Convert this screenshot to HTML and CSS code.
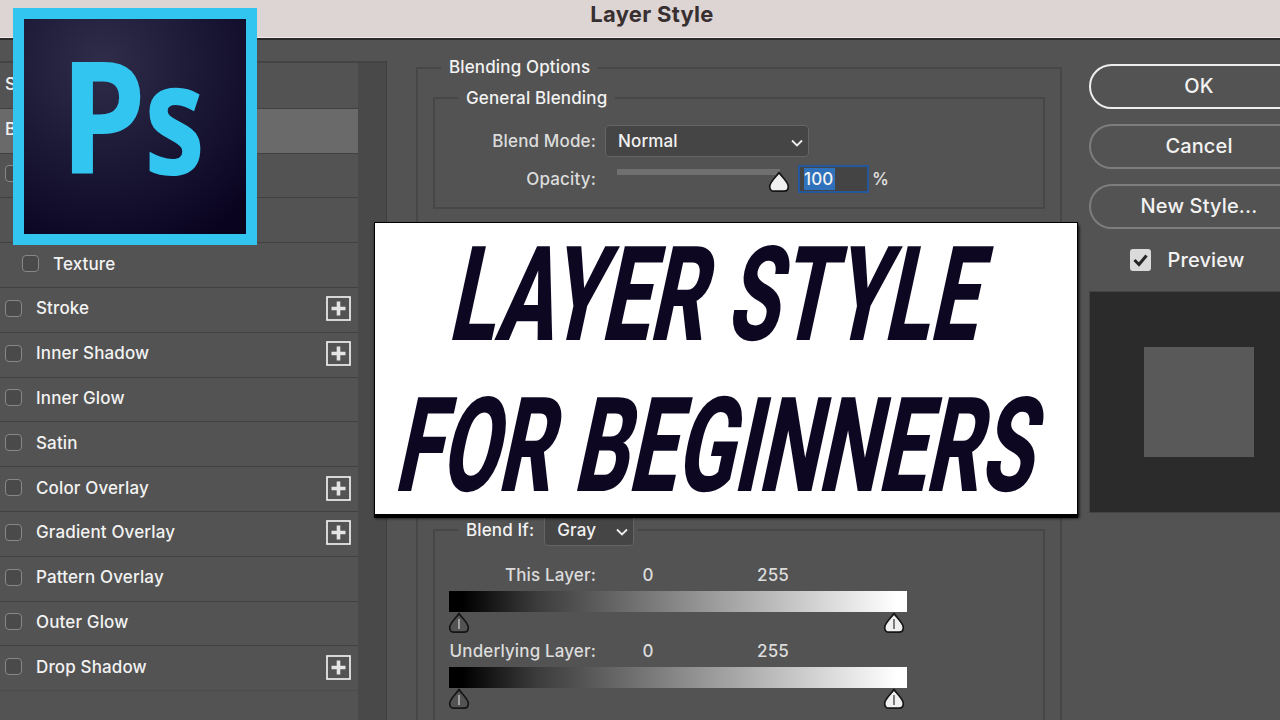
FILE: index.html
```html
<!DOCTYPE html>
<html lang="en">

<head>
    <meta charset="utf-8">
    <title>Layer Style</title>
    <link rel="stylesheet" href="styles.css">
</head>

<body>

    <!-- shared shapes -->
    <svg class="symbols" width="0" height="0">
        <symbol id="plus" viewBox="0 0 25 25">
            <rect x="1" y="1" width="23" height="23" fill="none" stroke="#eee" stroke-width="1.7" />
            <path d="M12.5 5.5v14M5.5 12.5h14" stroke="#e4e4e4" stroke-width="3.6" />
        </symbol>
        <symbol id="handle" viewBox="0 0 22 22">
            <path d="M11 1.5C13 5 20.3 11 20.3 15.5C20.3 18.5 18.8 20.2 16 20.2H6C3.2 20.2 1.7 18.5 1.7 15.5C1.7 11 9 5 11 1.5Z" stroke="#151515" stroke-width="1.7" stroke-linejoin="round" />
        </symbol>
        <symbol id="chevron" viewBox="0 0 12 8">
            <path d="M1 1.5L6 6.5L11 1.5" fill="none" stroke="#eee" stroke-width="1.8" />
        </symbol>
    </svg>

    <div class="titlebar">Layer Style</div>

    <div class="dialog">
        <div class="sidebar">
            <ul class="effects">
                <li>Styles</li>
                <li class="selected">Blending Options</li>
                <li><span class="check"></span></li>
                <li></li>
                <li class="nested"><span class="check"></span>Texture</li>
                <li><span class="check"></span>Stroke<svg class="plus"><use href="#plus" /></svg></li>
                <li><span class="check"></span>Inner Shadow<svg class="plus"><use href="#plus" /></svg></li>
                <li><span class="check"></span>Inner Glow</li>
                <li><span class="check"></span>Satin</li>
                <li><span class="check"></span>Color Overlay<svg class="plus"><use href="#plus" /></svg></li>
                <li><span class="check"></span>Gradient Overlay<svg class="plus"><use href="#plus" /></svg></li>
                <li><span class="check"></span>Pattern Overlay</li>
                <li><span class="check"></span>Outer Glow</li>
                <li><span class="check"></span>Drop Shadow<svg class="plus"><use href="#plus" /></svg></li>
            </ul>
            <div class="scrollbar"></div>
        </div>

        <fieldset class="options">
            <legend>Blending Options</legend>

            <fieldset class="general">
                <legend>General Blending</legend>
                <div class="row mode-row">
                    <span class="label">Blend Mode:</span>
                    <div class="select mode">Normal<svg class="chevron"><use href="#chevron" /></svg></div>
                </div>
                <div class="row opacity-row">
                    <span class="label">Opacity:</span>
                    <div class="slider">
                        <div class="track"></div>
                        <svg class="handle light"><use href="#handle" /></svg>
                    </div>
                    <div class="number"><span class="highlight">100</span></div>
                    <span class="unit">%</span>
                </div>
            </fieldset>

            <fieldset class="advanced">
                <legend>Advanced Blending</legend>
            </fieldset>

            <fieldset class="blend-if">
                <legend>Blend If:<div class="select channel">Gray<svg class="chevron"><use href="#chevron" /></svg></div></legend>
                <div class="range">
                    <div class="range-text"><span class="label">This Layer:</span><span class="low">0</span><span class="high">255</span></div>
                    <div class="ramp"></div>
                    <div class="handles">
                        <svg class="handle dark"><use href="#handle" /><path d="M11 7v10" stroke="#bbb" stroke-width="1.5" /></svg>
                        <svg class="handle light"><use href="#handle" /><path d="M11 7v10" stroke="#555" stroke-width="1.5" /></svg>
                    </div>
                </div>
                <div class="range">
                    <div class="range-text"><span class="label">Underlying Layer:</span><span class="low">0</span><span class="high">255</span></div>
                    <div class="ramp"></div>
                    <div class="handles">
                        <svg class="handle dark"><use href="#handle" /><path d="M11 7v10" stroke="#bbb" stroke-width="1.5" /></svg>
                        <svg class="handle light"><use href="#handle" /><path d="M11 7v10" stroke="#555" stroke-width="1.5" /></svg>
                    </div>
                </div>
            </fieldset>
        </fieldset>

        <div class="actions">
            <div class="button primary">OK</div>
            <div class="button">Cancel</div>
            <div class="button">New Style...</div>
            <div class="preview-toggle">
                <svg width="21" height="22" viewBox="0 0 21 22">
                    <rect width="21" height="22" rx="3" fill="#dadada" />
                    <path d="M4.5 11L9 15.5L16.5 6.5" fill="none" stroke="#262626" stroke-width="3" />
                </svg>
                Preview
            </div>
            <div class="preview"><div class="swatch"></div></div>
        </div>
    </div>

    <div class="logo">
        <svg width="222" height="215" viewBox="24 19 222 215">
            <g class="logo-text">
                <text x="59.5" y="173.5" textLength="87" lengthAdjust="spacingAndGlyphs">P</text>
                <text x="144" y="173.5" textLength="61" lengthAdjust="spacingAndGlyphs">s</text>
            </g>
        </svg>
    </div>

    <div class="banner">
        <svg width="702" height="290" viewBox="375 223 702 290">
            <g class="headline">
                <g transform="translate(0 340.3) skewX(-12.2)">
                    <text x="447" textLength="256" lengthAdjust="spacingAndGlyphs">LAYER</text>
                    <text x="725" textLength="250" lengthAdjust="spacingAndGlyphs">STYLE</text>
                </g>
                <g transform="translate(0 491.3) skewX(-12.2)">
                    <text x="393" textLength="157" lengthAdjust="spacingAndGlyphs">FOR</text>
                    <text x="572" textLength="459" lengthAdjust="spacingAndGlyphs">BEGINNERS</text>
                </g>
            </g>
        </svg>
    </div>

</body>

</html>
```
FILE: styles.css
```css
* {
    box-sizing: border-box;
}

html {
    overflow: hidden;
}

body {
    font-family: Inter, "Liberation Sans", sans-serif;
    font-size: 17px;
    font-weight: 500;
    letter-spacing: 0.14px;
    color: #f2f2f2;
    background: #535353;
    margin: 0;
    width: 1280px;
    height: 720px;
    overflow: hidden;
    position: relative;
}

.symbols {
    position: absolute;
}

.titlebar {
    height: 40px;
    background: #ddd4d4;
    border-bottom: 2px solid #2b2b2b;
    box-shadow: inset 0 -1px #f0eaea;
    color: #382f31;
    font-size: 22px;
    font-weight: 650;
    letter-spacing: 0.3px;
    line-height: 28px;
    text-align: center;
    padding-left: 24px;
}

.dialog {
    display: flex;
    height: 680px;
    overflow: hidden;
}

/* effect list */
.sidebar {
    display: flex;
    flex-shrink: 0;
    width: 387px;
    margin-top: 21px;
    border-top: 2px solid #444;
    border-right: 1px solid #3f3f3f;
}

.effects {
    list-style: none;
    margin: 0;
    padding: 0;
    width: 357.5px;
    flex-shrink: 0;
}

.effects li {
    display: flex;
    align-items: center;
    height: 44.8px;
    padding: 0 7px 3px 5px;
    border-top: 1px solid #414141;
    white-space: nowrap;
}

.effects li:first-child {
    border-top-color: #535353;
}

.effects li:last-child {
    box-shadow: 0 1px #4b4b4b;
}

.effects .selected {
    background: #6a6a6a;
}

.effects .nested {
    padding-left: 22px;
}

.check {
    width: 17px;
    height: 17px;
    border: 1.5px solid #888;
    border-radius: 4px;
    background: #4a4a4a;
    margin-right: 14px;
}

.plus {
    width: 25px;
    height: 25px;
    margin: 1px 0 0 auto;
}

.scrollbar {
    flex: 1;
    background: #494949;
}

/* centre column */
fieldset {
    border: 2px solid #474747;
    margin: 0;
    padding: 0;
    min-width: 0;
}

legend {
    height: 20px;
    line-height: 20px;
    margin-left: 23px;
    padding: 0 8px;
    white-space: nowrap;
}

.options {
    width: 646px;
    height: 720px;
    flex-shrink: 0;
    margin: 18px 0 0 29px;
}

.options > legend {
    line-height: 19px;
}

.options fieldset {
    width: 612px;
    margin-left: 15px;
}

.general {
    height: 121px;
    margin-top: 10px;
}

.advanced {
    height: 294px;
    margin-top: 11px;
}

.row {
    display: flex;
    align-items: center;
}

.label {
    width: 161px;
    text-align: right;
    color: #dcdcdc;
    white-space: nowrap;
}

.mode-row {
    height: 32px;
    margin-top: 17px;
}

.opacity-row {
    height: 28px;
    margin-top: 8px;
}

.select {
    display: flex;
    align-items: center;
    justify-content: space-between;
    height: 32px;
    border: 1.5px solid #656565;
    border-radius: 4px;
    background: #454545;
    padding: 0 5px 0 12px;
}

.chevron {
    width: 12px;
    height: 8px;
    margin-top: 4px;
}

.mode {
    width: 204px;
    margin-left: 9px;
}

.slider {
    position: relative;
    width: 173px;
    height: 28px;
    margin-left: 21px;
}

.track {
    width: 163px;
    height: 6px;
    margin-top: 4px;
    background: #707070;
}

.handle {
    width: 22px;
    height: 22px;
}

.light {
    fill: #f0f0f0;
}

.dark {
    fill: #535353;
}

.slider .handle {
    position: absolute;
    left: 151px;
    top: 6px;
}

.number {
    width: 71px;
    height: 28px;
    margin-left: 8px;
    padding: 1px 4px;
    border: 2px solid #24579b;
    background: #444;
}

.highlight {
    display: inline-block;
    height: 22px;
    line-height: 22px;
    padding-right: 2px;
    background: #2f72bb;
}

.unit {
    margin-left: 3px;
    color: #e4e4e4;
}

.blend-if {
    height: 260px;
}

.blend-if legend {
    display: flex;
    align-items: center;
    height: 32px;
    padding-right: 4px;
}

.channel {
    width: 90px;
    margin-left: 10px;
}

.range {
    height: 76px;
    margin-left: 14px;
}

.blend-if legend + .range {
    margin-top: 19px;
}

.range-text {
    display: flex;
    height: 20px;
    line-height: 20px;
    color: #dcdcdc;
}

.range-text .label {
    width: 147px;
}

.low {
    width: 104px;
    text-align: center;
}

.high {
    width: 146px;
    text-align: center;
}

.ramp {
    width: 458px;
    height: 21px;
    margin-top: 6px;
    background: linear-gradient(90deg, #000 3%, #3b3b3b 19%, #fff 98%);
}

.handles {
    display: flex;
    justify-content: space-between;
    width: 457px;
    margin-left: -1px;
}

/* right column */
.actions {
    width: 221px;
    flex-shrink: 0;
    margin: 24px 0 0 26.5px;
    font-size: 20px;
}

.button {
    height: 45px;
    line-height: 40px;
    margin-bottom: 15px;
    border: 2px solid #7d7d7d;
    border-radius: 23px;
    text-align: center;
}

.primary {
    border-color: #eee;
}

.preview-toggle {
    display: flex;
    align-items: center;
    gap: 17px;
    height: 24px;
    margin: 19px 0 19px 41px;
}

.preview {
    display: flex;
    align-items: center;
    justify-content: center;
    height: 222px;
    background: #2b2b2b;
    border: 1px solid #444;
}

.swatch {
    width: 110px;
    height: 110px;
    background: #595959;
}

/* artwork on top of the dialog */
.logo {
    position: absolute;
    left: 13px;
    top: 8px;
    width: 244px;
    height: 237px;
    border: 11px solid #31c5f0;
    background: radial-gradient(circle at 35% 20%, #302d4a, #1a1734 48%, #090320 90%);
}

.logo svg,
.banner svg {
    display: block;
}

.logo-text {
    font-family: "Open Sans", "Noto Sans", sans-serif;
    font-size: 156px;
    font-weight: 700;
    letter-spacing: 0;
    fill: #31c5f0;
}

.banner {
    position: absolute;
    left: 374px;
    top: 222px;
    width: 704px;
    height: 293px;
    border: 1px solid #000;
    background: #fff;
    box-shadow: 0 3px #000, 1px 3px 3px #000;
}

.headline {
    font-family: Roboto, "Liberation Sans", sans-serif;
    font-size: 132px;
    font-weight: 800;
    letter-spacing: 0;
    fill: #0d0722;
}
```
